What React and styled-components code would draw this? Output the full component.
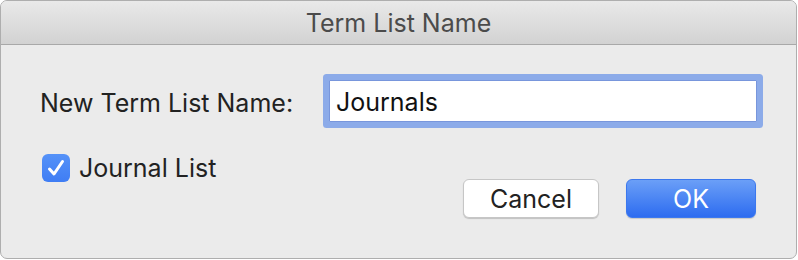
import React from "react";
import styled, { createGlobalStyle } from "styled-components";

const Global = createGlobalStyle`
  html, body { margin: 0; padding: 0; background: #ffffff; }
  * { box-sizing: border-box; }
`;

const Window = styled.div`
  width: 797px;
  height: 259px;
  border: 1px solid #aeaeae;
  border-radius: 7px;
  background: #ebebeb;
  overflow: hidden;
  display: flex;
  flex-direction: column;
  font-family: Inter, "Liberation Sans", sans-serif;
`;

const TitleBar = styled.div`
  height: 44px;
  flex: none;
  background: linear-gradient(#e9e9e9, #d2d2d2);
  border-bottom: 1px solid #a8a8a8;
  display: flex;
  align-items: center;
  justify-content: center;
  color: #4b4b4b;
  font-size: 25px;
  padding-top: 1px;
`;

const Body = styled.div`
  flex: 1;
  padding: 35px 39px 0 39px;
  display: flex;
  flex-direction: column;
`;

const NameRow = styled.div`
  display: flex;
  align-items: center;
`;

const Label = styled.label`
  font-size: 25px;
  color: #222;
  width: 289px;
  flex: none;
  padding-top: 3px;
  white-space: nowrap;
`;

const TextField = styled.div`
  width: 428px;
  height: 42px;
  background: #fff;
  border: 1px solid #7896dc;
  border-radius: 1px;
  box-shadow: 0 0 0 6px #8cabe9;
  display: flex;
  align-items: center;
  padding: 2px 6px 0 6px;
  font-size: 25px;
  color: #111;
`;

const BottomRow = styled.div`
  margin-top: 31px;
  display: flex;
  align-items: flex-start;
`;

const CheckLabel = styled.div`
  display: flex;
  align-items: center;
  gap: 9px;
  font-size: 25px;
  color: #222;
  margin-left: 2px;
`;

const Box = styled.span`
  width: 28px;
  height: 28px;
  border-radius: 6px;
  background: linear-gradient(#5592f8, #3f7df4);
  display: flex;
  align-items: center;
  justify-content: center;
`;

const Buttons = styled.div`
  margin-left: auto;
  margin-top: 26px;
  margin-right: 1px;
  display: flex;
  gap: 27px;
`;

const Button = styled.button`
  width: ${(p) => p.$w}px;
  height: 39px;
  border-radius: 6px;
  font-family: Inter, "Liberation Sans", sans-serif;
  font-size: 25px;
  padding: 1px 0 0 0;
  ${(p) =>
    p.$primary
      ? `
    background: linear-gradient(#6b9ff7, #2d6cf0);
    color: #fff;
    border: 1px solid #3c78ee;
    box-shadow: 0 1px 1px rgba(0,0,0,0.15);
  `
      : `
    background: #fff;
    color: #222;
    border: 1px solid #c6c6c6;
    box-shadow: 0 1px 1px rgba(0,0,0,0.18);
  `}
`;

export default function App() {
  return (
    <>
      <Global />
      <Window>
        <TitleBar>Term List Name</TitleBar>
        <Body>
          <NameRow>
            <Label>New Term List Name:</Label>
            <TextField>Journals</TextField>
          </NameRow>
          <BottomRow>
            <CheckLabel>
              <Box>
                <svg width="22" height="22" viewBox="0 0 22 22">
                  <path
                    d="M4.5 12 L9 17 L17.5 4.5"
                    fill="none"
                    stroke="#fff"
                    strokeWidth="3"
                    strokeLinecap="round"
                    strokeLinejoin="round"
                  />
                </svg>
              </Box>
              Journal List
            </CheckLabel>
            <Buttons>
              <Button $w={136}>Cancel</Button>
              <Button $w={130} $primary>OK</Button>
            </Buttons>
          </BottomRow>
        </Body>
      </Window>
    </>
  );
}
